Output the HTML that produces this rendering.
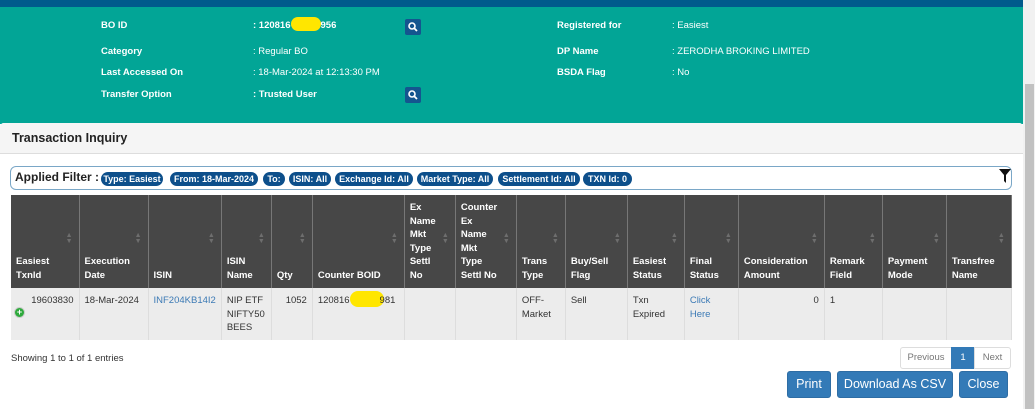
<!DOCTYPE html>
<html><head><style>
*{box-sizing:border-box;margin:0;padding:0}
body{width:1035px;height:409px;overflow:hidden;font-family:"Liberation Sans",Arial,sans-serif;font-size:10px;color:#333;background:#fff;position:relative}
.top{position:absolute;left:0;top:0;width:1023px;height:7px;background:#005a8c}
.teal{position:absolute;left:0;top:7px;width:1023px;height:117px;background:#02a596;color:#fff}
.t{position:absolute;font-size:9.5px;white-space:nowrap}
.b{font-weight:bold}
.sb{position:absolute;width:16px;height:16px;background:#14558f;border-radius:2px}
.sb svg{position:absolute;left:3px;top:3px}
.scroll{position:absolute;left:1023px;top:0;width:12px;height:409px;background:#f1f1f1}
.thumb{position:absolute;left:1025px;top:84px;width:9px;height:325px;background:#c1c1c1}
.panel{position:absolute;left:0;top:123px;width:1023px;height:286px;background:#fff;border-radius:4px 4px 0 0}
.ph{position:absolute;left:0;top:123px;width:1023px;height:31px;background:#f5f5f5;border-bottom:1px solid #ddd;border-radius:4px 4px 0 0}
.ph span{position:absolute;left:12px;top:8px;font-size:12.5px;font-weight:bold;color:#222}
.filter{position:absolute;left:10px;top:166px;width:1002px;height:24px;border:1px solid #7aa7c7;border-radius:6px}
.filter .lab{position:absolute;left:4px;top:3px;font-size:12px;font-weight:bold;color:#222}
.pill{position:absolute;top:5px;height:14px;background:#0d4f8b;color:#fff;font-size:9px;font-weight:bold;border-radius:7px;line-height:14px;text-align:center;white-space:nowrap;overflow:hidden}
table{position:absolute;left:11px;top:195px;border-collapse:collapse;table-layout:fixed}
th{background:#474747;color:#fff;font-size:9.5px;text-align:left;vertical-align:bottom;padding:0 5px 6px;border-right:1px solid #777;height:93px;line-height:13.5px;position:relative;white-space:nowrap}
th i{position:absolute;right:6px;top:38px;font-style:normal;color:#6e6e6e;font-size:7px;line-height:6px}
td{background:#ececec;border-right:1px solid #ddd;vertical-align:top;padding:6px 5px 0;height:52px;font-size:9.5px;line-height:13.5px;color:#333}
.lnk{color:#3c7ab5}
.pg{position:absolute;top:347px;height:22px;border:1px solid #ddd;font-size:9.5px;color:#777;line-height:20px;text-align:center}
.btn{position:absolute;top:371px;height:27px;background:#337ab7;border:1px solid #2e6da4;border-radius:3px;color:#fff;font-size:12.5px;line-height:25px;text-align:center}
</style></head><body>
<div class="top"></div>
<div class="teal">
<div class="t b" style="left:101px;top:13px">BO ID</div>
<div class="t b" style="left:253px;top:13px">: 120816<span style="display:inline-block;width:30px;height:14px;background:#ffe600;border-radius:8px;vertical-align:middle;margin-top:-3px"></span>956</div>
<div class="sb" style="left:405px;top:12px"><svg width="10" height="10"><circle cx="4" cy="4" r="3" stroke="#fff" stroke-width="1.6" fill="none"/><line x1="6" y1="6" x2="9" y2="9" stroke="#fff" stroke-width="1.8"/></svg></div>
<div class="t b" style="left:101px;top:39px">Category</div>
<div class="t" style="left:253px;top:39px">: Regular BO</div>
<div class="t b" style="left:101px;top:60px">Last Accessed On</div>
<div class="t" style="left:253px;top:60px">: 18-Mar-2024 at 12:13:30 PM</div>
<div class="t b" style="left:101px;top:82px">Transfer Option</div>
<div class="t b" style="left:253px;top:82px">: Trusted User</div>
<div class="sb" style="left:405px;top:80px"><svg width="10" height="10"><circle cx="4" cy="4" r="3" stroke="#fff" stroke-width="1.6" fill="none"/><line x1="6" y1="6" x2="9" y2="9" stroke="#fff" stroke-width="1.8"/></svg></div>
<div class="t b" style="left:557px;top:13px">Registered for</div>
<div class="t" style="left:672px;top:13px">: Easiest</div>
<div class="t b" style="left:557px;top:39px">DP Name</div>
<div class="t" style="left:672px;top:39px">: ZERODHA BROKING LIMITED</div>
<div class="t b" style="left:557px;top:60px">BSDA Flag</div>
<div class="t" style="left:672px;top:60px">: No</div>
</div>
<div class="scroll"></div><div class="thumb"></div>
<div class="panel"></div>
<div class="ph"><span>Transaction Inquiry</span></div>
<div class="filter"><span class="lab">Applied Filter :</span>
<span class="pill" style="left:90px;width:62px">Type: Easiest</span>
<span class="pill" style="left:159px;width:88px">From: 18-Mar-2024</span>
<span class="pill" style="left:252px;width:22px">To:</span>
<span class="pill" style="left:278px;width:42px">ISIN: All</span>
<span class="pill" style="left:324px;width:78px">Exchange Id: All</span>
<span class="pill" style="left:406px;width:76px">Market Type: All</span>
<span class="pill" style="left:487px;width:82px">Settlement Id: All</span>
<span class="pill" style="left:572px;width:49px">TXN Id: 0</span>
<svg style="position:absolute;left:987px;top:1px" width="14" height="16"><path d="M1 1H13L8 7V15L6 13V7Z" fill="#111"/></svg>
</div>
<table>
<colgroup><col style="width:68px"><col style="width:69px"><col style="width:72px"><col style="width:50px"><col style="width:41px"><col style="width:92px"><col style="width:51px"><col style="width:61px"><col style="width:49px"><col style="width:62px"><col style="width:57px"><col style="width:54px"><col style="width:86px"><col style="width:58px"><col style="width:64px"><col style="width:65px"></colgroup>
<tr><th>Easiest<br>Txnld<i>▲<br>▼</i></th><th>Execution<br>Date<i>▲<br>▼</i></th><th>ISIN<i>▲<br>▼</i></th><th>ISIN<br>Name<i>▲<br>▼</i></th><th>Qty<i>▲<br>▼</i></th><th>Counter BOID<i>▲<br>▼</i></th><th>Ex<br>Name<br>Mkt<br>Type<br>Settl<br>No<i>▲<br>▼</i></th><th>Counter<br>Ex<br>Name<br>Mkt<br>Type<br>Settl No<i>▲<br>▼</i></th><th>Trans<br>Type<i>▲<br>▼</i></th><th>Buy/Sell<br>Flag<i>▲<br>▼</i></th><th>Easiest<br>Status<i>▲<br>▼</i></th><th>Final<br>Status<i>▲<br>▼</i></th><th>Consideration<br>Amount<i>▲<br>▼</i></th><th>Remark<br>Field<i>▲<br>▼</i></th><th>Payment<br>Mode<i>▲<br>▼</i></th><th>Transfree<br>Name<i>▲<br>▼</i></th></tr>
<tr><td style="text-align:right;position:relative">19603830<span style="position:absolute;left:3px;top:19px;width:11px;height:11px;border-radius:50%;background:#2eaa3c;border:1px solid #ccc;color:#fff;font-size:9px;line-height:9px;text-align:center;font-weight:bold">+</span></td><td>18-Mar-2024</td><td class="lnk">INF204KB14I2</td><td>NIP ETF NIFTY50 BEES</td><td style="text-align:right">1052</td><td style="white-space:nowrap">120816<span style="display:inline-block;width:34px;height:16px;background:#ffe600;border-radius:8px;vertical-align:middle;margin:-3px -4px 0 0"></span>981</td><td></td><td></td><td>OFF-<br>Market</td><td>Sell</td><td>Txn<br>Expired</td><td class="lnk">Click<br>Here</td><td style="text-align:right">0</td><td>1</td><td></td><td></td></tr>
</table>
<div class="t" style="left:11px;top:353px;color:#333">Showing 1 to 1 of 1 entries</div>
<div class="pg" style="left:900px;width:52px;border-radius:3px 0 0 3px">Previous</div>
<div class="pg" style="left:951px;width:24px;background:#337ab7;border-color:#337ab7;color:#fff">1</div>
<div class="pg" style="left:974px;width:37px;border-radius:0 3px 3px 0">Next</div>
<div class="btn" style="left:787px;width:44px">Print</div>
<div class="btn" style="left:837px;width:116px">Download As CSV</div>
<div class="btn" style="left:959px;width:49px">Close</div>
</body></html>
